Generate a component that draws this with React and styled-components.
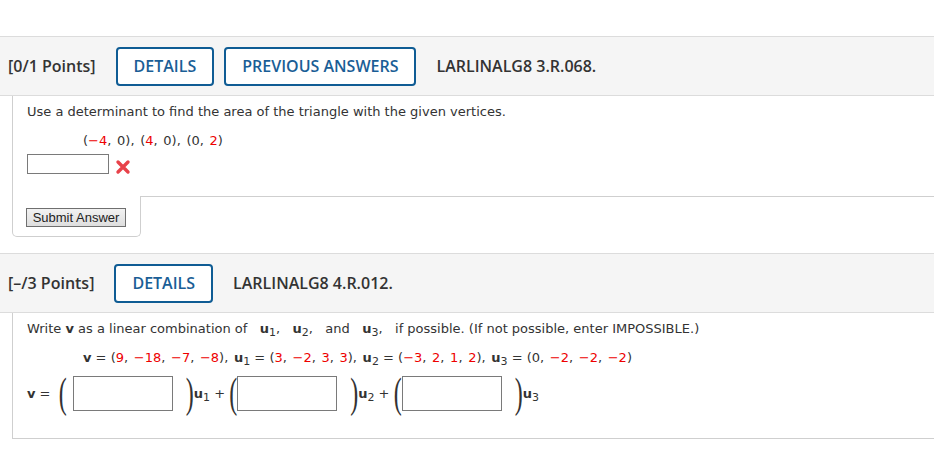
import styled, { createGlobalStyle } from "styled-components";

const GlobalStyle = createGlobalStyle`
  html, body {
    margin: 0;
    padding: 0;
    background: #fff;
  }
`;

const Page = styled.div`
  padding-top: 36px;
  width: 934px;
`;

const Question = styled.section`
  margin-bottom: ${(p) => p.$gap || 0}px;
`;

const Header = styled.div`
  display: flex;
  align-items: center;
  gap: 20px;
  height: 58px;
  padding-left: 8px;
  background: #f5f5f5;
  border-top: 1px solid #dcdcdc;
  border-bottom: 1px solid #dcdcdc;
  font-family: "Open Sans", "Liberation Sans", sans-serif;
  font-size: 16px;
  font-weight: 600;
  color: #333;
`;

const Buttons = styled.div`
  display: flex;
  gap: 10px;
`;

const HeadButton = styled.button`
  height: 39px;
  padding: 0 16px;
  background: #fff;
  border: 2px solid #0f5c94;
  border-radius: 4px;
  font-family: "Open Sans", "Liberation Sans", sans-serif;
  font-size: 16px;
  font-weight: 600;
  color: #1a5e96;
`;

const Body = styled.div`
  margin-left: 12px;
  border-left: 1px solid #cfcfcf;
  border-bottom: ${(p) => (p.$closed ? "1px solid #cfcfcf" : "none")};
  padding: 6px 14px 0;
  height: ${(p) => p.$height}px;
  box-sizing: border-box;
  font-family: Verdana, "DejaVu Sans", sans-serif;
  font-size: 13px;
  color: #333;
`;

const Line = styled.div`
  display: flex;
  align-items: center;
  height: ${(p) => p.$h || 18}px;
  margin-left: ${(p) => p.$indent || 0}px;
  margin-bottom: ${(p) => p.$mb || 0}px;
  white-space: pre;
`;

const Red = styled.span`
  color: #ee0000;
`;

const Comma = styled.span`
  margin-right: 1.5px;
`;

const Bold = styled.b`
  font-weight: bold;
  color: #333;
`;

const Sub = styled.span`
  display: inline-block;
  font-size: 11px;
  transform: translateY(4px);
`;

const AnswerBox = styled.span`
  display: inline-block;
  width: ${(p) => p.$w}px;
  height: ${(p) => p.$h}px;
  box-sizing: border-box;
  border: 1px solid #7a7a7a;
  background: #fff;
`;

const Paren = styled.span`
  display: inline-block;
  font-family: "Liberation Serif", serif;
  font-size: 24px;
  line-height: 24px;
  transform: scaleY(1.75);
  color: #333;
  margin: 0 ${(p) => p.$r || 0}px 0 ${(p) => p.$l || 0}px;
`;

const Footer = styled.div`
  display: flex;
  margin-left: 12px;
`;

const SubmitTab = styled.div`
  width: 129px;
  height: 41px;
  box-sizing: border-box;
  border: 1px solid #cfcfcf;
  border-top: none;
  border-radius: 0 0 5px 5px;
  padding: 12px 0 0 13px;
`;

const Filler = styled.div`
  flex: 1;
  border-top: 1px solid #cfcfcf;
`;

const SubmitButton = styled.button`
  display: block;
  height: 19px;
  width: 100px;
  padding: 0;
  border: 1px solid #6f6f6f;
  background: linear-gradient(#f2f2f2, #dedede);
  font-family: "Liberation Sans", Arial, sans-serif;
  font-size: 13px;
  color: #222;
`;

const CrossIcon = () => (
  <svg width="16" height="16" viewBox="0 0 16 16" style={{ marginLeft: 6, marginTop: 6 }}>
    <path d="M3 3 L13 13 M13 3 L3 13" stroke="#e8424a" strokeWidth="3.4" strokeLinecap="round" />
  </svg>
);

const U = ({ n }) => (
  <>
    <Bold>u</Bold>
    <Sub>{n}</Sub>
  </>
);

// values other than 0 are shown in red
const Tuple = ({ vals }) => (
  <>
    (
    {vals.map((v, i) => (
      <span key={i}>
        {v === "0" ? v : <Red>{v}</Red>}
        {i < vals.length - 1 && <Comma>, </Comma>}
      </span>
    ))}
    )
  </>
);

export default function App() {
  return (
    <>
      <GlobalStyle />
      <Page>
        <Question $gap={16}>
          <Header>
            <span>[0/1 Points]</span>
            <Buttons>
              <HeadButton>DETAILS</HeadButton>
              <HeadButton>PREVIOUS ANSWERS</HeadButton>
            </Buttons>
            <span>LARLINALG8 3.R.068.</span>
          </Header>
          <Body $height={100}>
            <Line $mb={11}>Use a determinant to find the area of the triangle with the given vertices.</Line>
            <Line $indent={56} $mb={4}>
              <Tuple vals={["−4", "0"]} /><Comma>, </Comma><Tuple vals={["4", "0"]} /><Comma>, </Comma><Tuple vals={["0", "2"]} />
            </Line>
            <Line $h={22}>
              <AnswerBox $w={82} $h={20} />
              <CrossIcon />
            </Line>
          </Body>
          <Footer>
            <SubmitTab>
              <SubmitButton>Submit Answer</SubmitButton>
            </SubmitTab>
            <Filler />
          </Footer>
        </Question>

        <Question>
          <Header>
            <span>[–/3 Points]</span>
            <Buttons>
              <HeadButton>DETAILS</HeadButton>
            </Buttons>
            <span>LARLINALG8 4.R.012.</span>
          </Header>
          <Body $height={126} $closed>
            <Line $mb={11}>
              Write <Bold>v</Bold> as a linear combination of   <U n="1" />,   <U n="2" />,   and   <U n="3" />,   if possible. (If not possible, enter IMPOSSIBLE.)
            </Line>
            <Line $indent={56} $mb={7}>
              <Bold>v</Bold> = <Tuple vals={["9", "−18", "−7", "−8"]} /><Comma>, </Comma>
              <U n="1" /> = <Tuple vals={["3", "−2", "3", "3"]} /><Comma>, </Comma>
              <U n="2" /> = <Tuple vals={["−3", "2", "1", "2"]} /><Comma>, </Comma>
              <U n="3" /> = <Tuple vals={["0", "−2", "−2", "−2"]} />
            </Line>
            <Line $h={40}>
              <Bold>v</Bold> =  <Paren $r={6}>(</Paren>
              <AnswerBox $w={100} $h={35} />
              <Paren $l={13}>)</Paren><U n="1" /> + <Paren>(</Paren>
              <AnswerBox $w={100} $h={35} />
              <Paren $l={13}>)</Paren><U n="2" /> + <Paren>(</Paren>
              <AnswerBox $w={100} $h={35} />
              <Paren $l={13}>)</Paren><U n="3" />
            </Line>
          </Body>
        </Question>
      </Page>
    </>
  );
}
